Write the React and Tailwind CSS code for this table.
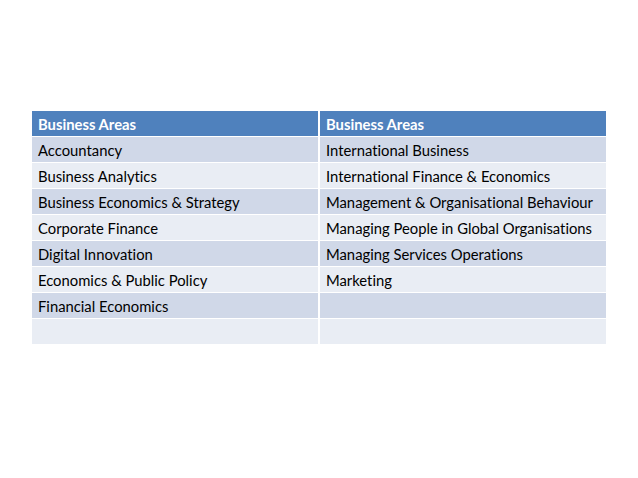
const rows = [
  ["Accountancy", "International Business"],
  ["Business Analytics", "International Finance & Economics"],
  ["Business Economics & Strategy", "Management & Organisational Behaviour"],
  ["Corporate Finance", "Managing People in Global Organisations"],
  ["Digital Innovation", "Managing Services Operations"],
  ["Economics & Public Policy", "Marketing"],
  ["Financial Economics", ""],
  ["", ""],
];

const App = () => {
  return (
    <div
      className="w-[638px] h-[478px] bg-white pt-[111px] pl-[32px]"
      style={{ fontFamily: "Lato, 'Open Sans', sans-serif", fontVariantLigatures: "none" }}
    >
      <div className="grid grid-cols-2 w-[574px] gap-x-[2px] gap-y-px">
        <div className="h-[25px] flex items-center px-[6px] pt-px bg-[#4f81bd] text-white font-bold text-[14.8px]">Business Areas</div>
        <div className="h-[25px] flex items-center px-[6px] pt-px bg-[#4f81bd] text-white font-bold text-[14.8px]">Business Areas</div>
        {rows.map((r, i) =>
          r.map((c, j) => (
            <div
              key={`${i}-${j}`}
              className={`h-[25px] flex items-center px-[6px] pt-px text-[14.8px] text-black ${i % 2 === 0 ? "bg-[#d0d8e8]" : "bg-[#e9edf4]"}`}
            >
              {c}
            </div>
          ))
        )}
      </div>
    </div>
  );
};

export default App;
